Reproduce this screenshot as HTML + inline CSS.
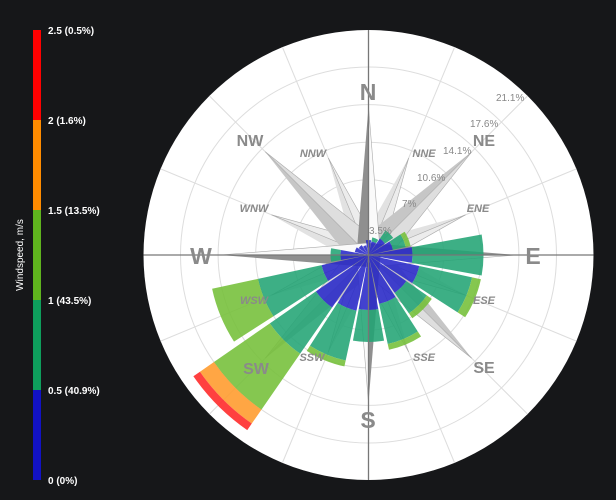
<!DOCTYPE html>
<html><head><meta charset="utf-8"><style>
html,body{margin:0;padding:0;background:#161719;width:616px;height:500px;overflow:hidden;font-family:"Liberation Sans",sans-serif}
svg{position:absolute;left:0;top:0}
</style></head><body>
<svg id="s" width="616" height="500" viewBox="0 0 616 500">
<rect x="33" y="30" width="8" height="90" fill="#ff0000"/>
<rect x="33" y="120" width="8" height="90" fill="#ff8c00"/>
<rect x="33" y="210" width="8" height="90" fill="#5fb41e"/>
<rect x="33" y="300" width="8" height="90" fill="#0e9e5c"/>
<rect x="33" y="390" width="8" height="90" fill="#1212c4"/>
<g fill="#fff" font-size="10" font-weight="bold">
<text x="48" y="34">2.5 (0.5%)</text>
<text x="48" y="124">2 (1.6%)</text>
<text x="48" y="214">1.5 (13.5%)</text>
<text x="48" y="304">1 (43.5%)</text>
<text x="48" y="394">0.5 (40.9%)</text>
<text x="48" y="484">0 (0%)</text>
<text transform="translate(23,255) rotate(-90)" text-anchor="middle" font-weight="normal" font-size="10">Windspeed, m/s</text>
</g>
<circle cx="368.5" cy="255" r="225" fill="#fff"/>
<g id="grid"></g>
<g id="star"></g>
<g id="bars"></g>
<line x1="368.5" y1="30" x2="368.5" y2="480" stroke="#777" stroke-width="1.3"/>
<line x1="143.5" y1="255" x2="593.5" y2="255" stroke="#777" stroke-width="1.3"/>
<g fill="#8a8a8a" font-weight="bold" text-anchor="middle">
<text x="368" y="100" font-size="23">N</text>
<text x="368" y="428" font-size="23">S</text>
<text x="533" y="264" font-size="23">E</text>
<text x="201" y="264" font-size="23">W</text>
<text x="250" y="146" font-size="16">NW</text>
<text x="484" y="146" font-size="16">NE</text>
<text x="484" y="373" font-size="16">SE</text>
<text x="256" y="374" font-size="16">SW</text>
<g font-size="11" font-style="italic">
<text x="313" y="157">NNW</text>
<text x="424" y="157">NNE</text>
<text x="478" y="212">ENE</text>
<text x="484" y="304">ESE</text>
<text x="424" y="361">SSE</text>
<text x="312" y="361">SSW</text>
<text x="254" y="304">WSW</text>
<text x="254" y="212">WNW</text>
</g>
</g>
<g fill="#888" font-size="10">
<text x="369" y="234">3.5%</text>
<text x="402" y="207">7%</text>
<text x="417" y="181">10.6%</text>
<text x="443" y="154">14.1%</text>
<text x="470" y="127">17.6%</text>
<text x="496" y="101">21.1%</text>
</g>
</svg>
<script>
var cx=368.5,cy=255,NS="http://www.w3.org/2000/svg";
function P(a,r){var t=a*Math.PI/180;return [cx+r*Math.sin(t),cy-r*Math.cos(t)];}
function el(p,tag,at){var e=document.createElementNS(NS,tag);for(var k in at)e.setAttribute(k,at[k]);p.appendChild(e);return e;}
var g=document.getElementById('grid');
for(var r=37.6;r<224;r+=37.6)el(g,'circle',{cx:cx,cy:cy,r:r,fill:'none',stroke:'#ddd','stroke-width':1});
for(var i=0;i<16;i++){var q=P(i*22.5,225);el(g,'line',{x1:cx,y1:cy,x2:q[0],y2:q[1],stroke:'#ddd','stroke-width':1});}
var s=document.getElementById('star');
function pt(a,len,w,c1,c2){var t=P(a,len),l=P(a-90,w),rr=P(a+90,w);
el(s,'polygon',{points:[cx,cy,l[0],l[1],t[0],t[1]].join(' '),fill:c1});
el(s,'polygon',{points:[cx,cy,t[0],t[1],rr[0],rr[1]].join(' '),fill:c2,stroke:'#aaa','stroke-width':0.6});}
for(var i=1;i<16;i+=2)pt(i*22.5,105,13,'#e2e2e2','#ececec');
for(var i=1;i<8;i+=2)pt(i*45,146,17,'#c6c6c6','#dedede');
for(var i=0;i<4;i++)pt(i*90,148,12,'#8f8f8f','#fafafa');
var b=document.getElementById('bars');
var cols=['#2828c8','#22a474','#74bf38','#ff9a2a','#ff2626'];
var d=[[15],[14,18],[20,30],[25,38,43],[44,115],[52,106,115],[46,71,77],[50,91,97],[55,87],[57,108,114],[64,120,188,205,213],[48,113,160],[28,38],[14],[12],[10]];
function wedge(a,r0,r1,c){var h=10.3,p1=P(a-h,r0),p2=P(a-h,r1),p3=P(a+h,r1),p4=P(a+h,r0);
var path='M'+p1+'L'+p2+'A'+r1+','+r1+' 0 0 1 '+p3+'L'+p4+(r0>0?'A'+r0+','+r0+' 0 0 0 '+p1:'')+'Z';
el(b,'path',{d:path,fill:c,'fill-opacity':0.88});}
for(var i=0;i<16;i++){var r0=0;for(var j=0;j<d[i].length;j++){wedge(i*22.5,r0,d[i][j],cols[j]);r0=d[i][j];}}
</script>
</body></html>
